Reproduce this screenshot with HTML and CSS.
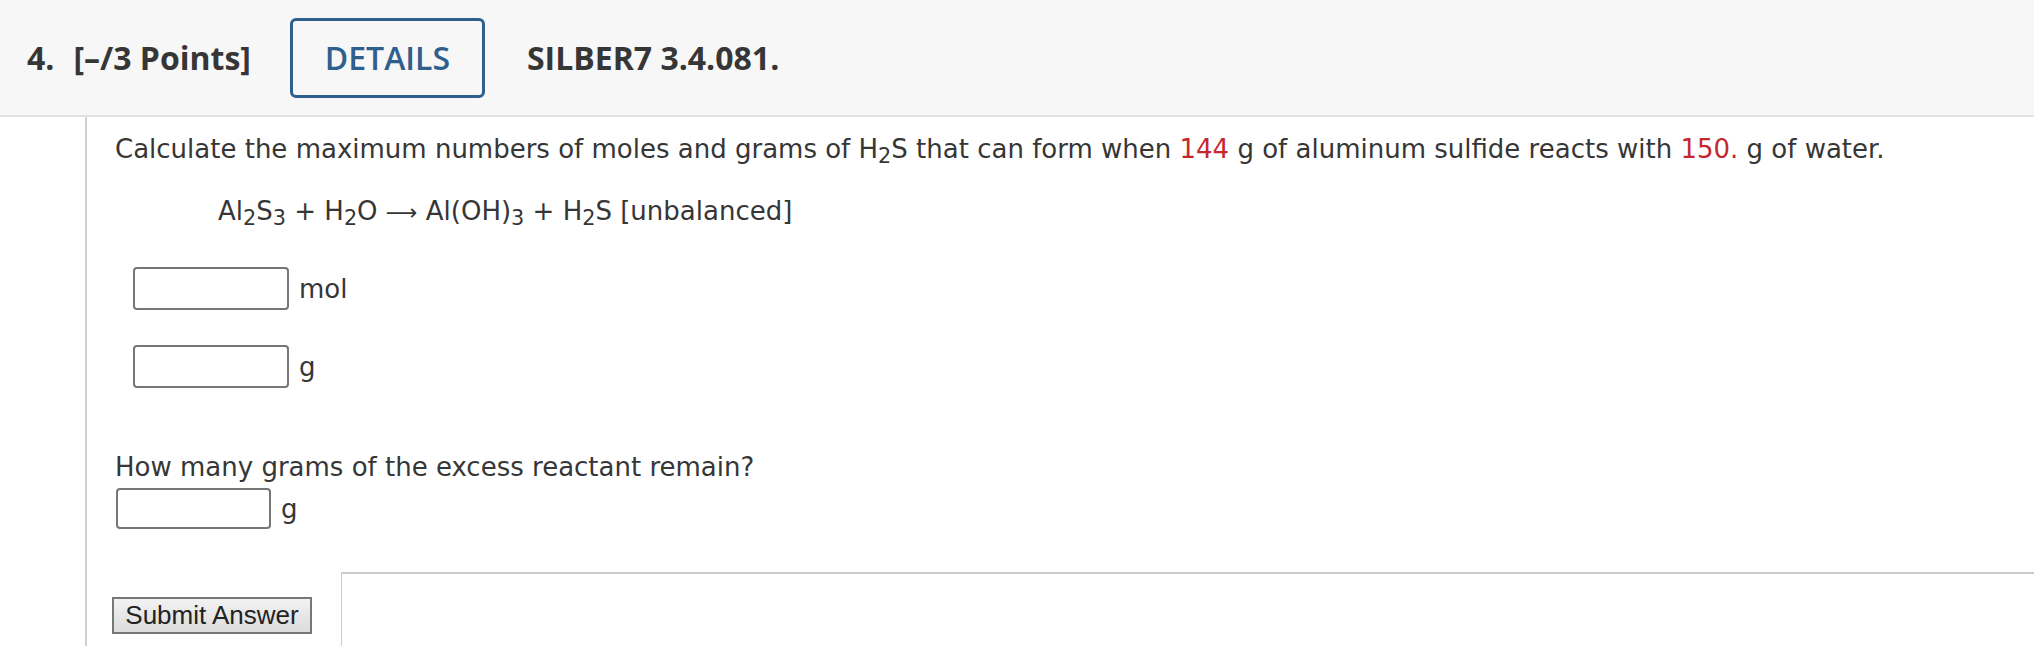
FILE: index.html
```html
<!DOCTYPE html>
<html>
<head>
<meta charset="utf-8">
<link rel="stylesheet" href="styles.css">
</head>
<body>
<div class="header">
  <span class="qnum">4.</span>
  <span class="points">[–/3 Points]</span>
  <span class="details">DETAILS</span>
  <span class="code">SILBER7 3.4.081.</span>
</div>
<div class="main">
  <p class="question">Calculate the maximum numbers of moles and grams of H<sub>2</sub>S that can form when <span class="red">144</span> g of aluminum sulfide reacts with <span class="red">150.</span> g of water.</p>
  <p class="equation">Al<sub>2</sub>S<sub>3</sub> + H<sub>2</sub>O <span class="arrow">⟶</span> Al(OH)<sub>3</sub> + H<sub>2</sub>S [unbalanced]</p>
  <div class="answer indent first"><span class="box"></span><span class="unit">mol</span></div>
  <div class="answer indent second"><span class="box"></span><span class="unit">g</span></div>
  <p class="question2">How many grams of the excess reactant remain?</p>
  <div class="answer third"><span class="box"></span><span class="unit">g</span></div>
  <div class="bottom">
    <span class="submit">Submit Answer</span>
    <div class="panel"></div>
  </div>
</div>
</body>
</html>
```
FILE: styles.css
```css
html, body {
  margin: 0;
  padding: 0;
  background: #ffffff;
  overflow: hidden;
}
body {
  width: 2034px;
  height: 646px;
  color: #363636;
  font-family: "DejaVu Sans", Verdana, sans-serif;
}
.header {
  height: 115px;
  background: #f7f7f7;
  border-bottom: 2px solid #e2e2e2;
  display: flex;
  align-items: center;
  padding-left: 27px;
  font-family: "Open Sans", sans-serif;
  font-weight: 700;
  font-size: 32px;
  color: #363636;
}
.points {
  margin-left: 19px;
}
.details {
  margin-left: 39px;
  box-sizing: border-box;
  width: 195px;
  height: 80px;
  border: 3px solid #2f5f8c;
  border-radius: 6px;
  display: flex;
  align-items: center;
  justify-content: center;
  color: #2f5f8c;
  font-weight: 600;
}
.code {
  margin-left: 42px;
}
.main {
  margin-left: 85px;
  border-left: 2px solid #cfcfcf;
  padding-left: 28px;
  padding-top: 17px;
  height: 529px;
  font-size: 26px;
  line-height: 30px;
}
p {
  margin: 0;
}
sub {
  font-size: 0.8em;
  line-height: 0;
  vertical-align: -0.25em;
}
.red {
  color: #c4282c;
}
.equation {
  margin-top: 32px;
  padding-left: 103px;
}
.arrow {
  font-size: 0.85em;
  line-height: 0;
}
.answer {
  display: flex;
  align-items: center;
}
.indent {
  padding-left: 18px;
}
.first {
  margin-top: 41px;
}
.second {
  margin-top: 35px;
}
.box {
  box-sizing: border-box;
  width: 156px;
  height: 43px;
  border: 2px solid #767676;
  border-radius: 4px;
  background: #fff;
}
.third .box {
  width: 155px;
  height: 41px;
  margin-left: 1px;
}
.unit {
  margin-left: 10px;
}
.question2 {
  margin-top: 64px;
}
.third {
  margin-top: 6px;
}
.bottom {
  margin-top: 43px;
  display: flex;
  align-items: flex-start;
}
.submit {
  margin-top: 25px;
  margin-left: -3px;
  box-sizing: border-box;
  width: 200px;
  height: 37px;
  border: 2px solid #777777;
  background: linear-gradient(#f2f2f2, #dcdcdc);
  font-family: "Liberation Sans", Arial, sans-serif;
  font-size: 26px;
  line-height: 33px;
  text-align: center;
  color: #222;
}
.panel {
  margin-left: 29px;
  flex: 1;
  height: 80px;
  border-top: 2px solid #cccccc;
  border-left: 1px solid #cccccc;
}
```
